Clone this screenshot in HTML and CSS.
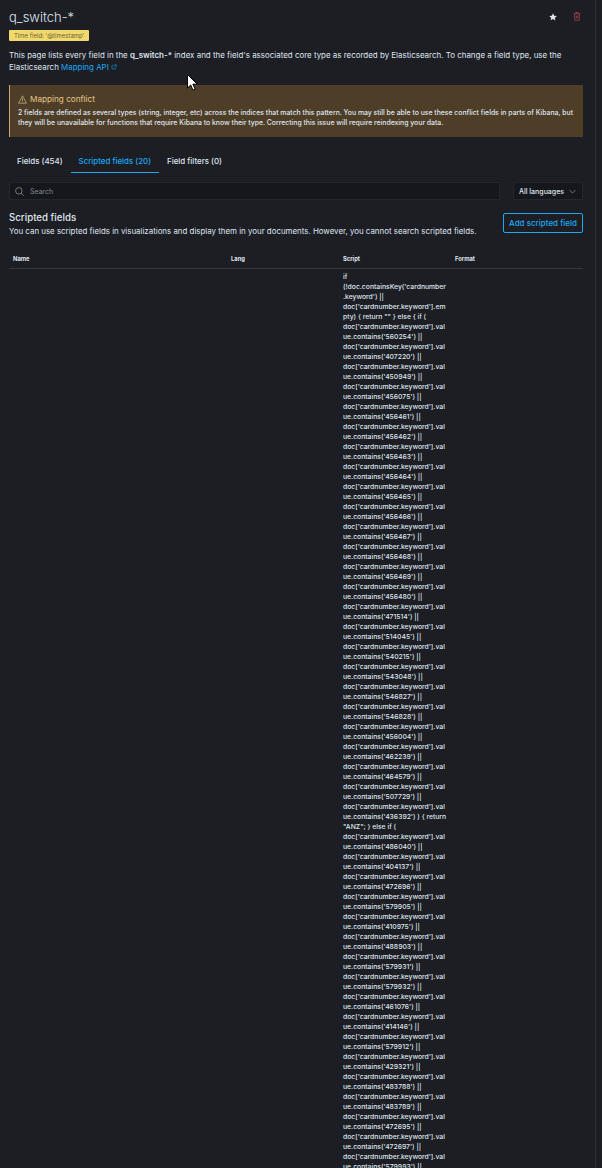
FILE: index.html
```html
<!DOCTYPE html>
<html lang="en">
<head>
<meta charset="utf-8">
<title>q_switch-*</title>
<link rel="stylesheet" href="styles.css">
</head>
<body>
<div class="page">
  <header class="head">
    <div class="head-left">
      <h1>q_switch-*</h1>
      <span class="badge">Time field: '@timestamp'</span>
    </div>
    <div class="head-icons">
      <svg class="ico" viewBox="0 0 16 16" width="8" height="8"><path fill="#dfe5ef" d="M8 0.6l2.300 4.900 5.300.7-3.900 3.700 1 5.300L8 12.100l-4.700 2.600 1-5.300L.4 6.200l5.300-.7z"/></svg>
      <svg class="ico" viewBox="0 0 16 18" width="8" height="9"><path fill="none" stroke="#8a3b42" stroke-width="2" d="M1 3.500h14M5.500 3.500V1h5v2.500M3 3.500l.6 13h8.800l.6-13M6.500 7v6M9.500 7v6"/></svg>
    </div>
  </header>
  <p class="intro">This page lists every field in the <b>q_switch-*</b> index and the field's associated core type as recorded by Elasticsearch. To change a field type, use the Elasticsearch <a class="link">Mapping API <svg viewBox="0 0 12 12" width="6" height="6"><path fill="none" stroke="#1ba9f5" d="M5 2.500H2v7.500h7.500V7M6.500 1.500h4v4M10.500 1.500L5.500 6.500"/></svg></a></p>
  <section class="callout">
    <div class="callout-title">
      <svg viewBox="0 0 16 16" width="9" height="9"><path fill="none" stroke="#d6bf8f" stroke-width="1.200" d="M8 1.500L15 14.500H1zM8 6v4.500M8 11.500v1.500"/></svg>
      <span>Mapping conflict</span>
    </div>
    <p>2 fields are defined as several types (string, integer, etc) across the indices that match this pattern. You may still be able to use these conflict fields in parts of Kibana, but they will be unavailable for functions that require Kibana to know their type. Correcting this issue will require reindexing your data.</p>
  </section>
  <nav class="tabs">
    <a class="tab">Fields (454)</a>
    <a class="tab active">Scripted fields (20)</a>
    <a class="tab">Field filters (0)</a>
  </nav>
  <div class="filters">
    <div class="search">
      <svg viewBox="0 0 16 16" width="9" height="9"><path fill="none" stroke="#98a2b3" stroke-width="1.200" d="M6.800 1a5.800 5.800 0 1 0 0 11.600a5.800 5.800 0 1 0 0-11.600zM11 11l4.500 4.500"/></svg>
      <span>Search</span>
    </div>
    <div class="select">
      <span>All languages</span>
      <svg viewBox="0 0 16 16" width="7" height="7"><path fill="none" stroke="#98a2b3" stroke-width="1.500" d="M1.500 5L8 11.500 14.500 5"/></svg>
    </div>
  </div>
  <div class="section-head">
    <div>
      <h2>Scripted fields</h2>
      <p>You can use scripted fields in visualizations and display them in your documents. However, you cannot search scripted fields.</p>
    </div>
    <button class="add">Add scripted field</button>
  </div>
  <table class="fields">
    <thead>
      <tr><th class="c-name">Name</th><th class="c-lang">Lang</th><th class="c-script">Script</th><th class="c-format">Format</th></tr>
    </thead>
    <tbody>
      <tr>
        <td></td><td></td>
        <td class="script">if (!doc.containsKey('cardnumber.keyword') || doc['cardnumber.keyword'].empty) { return "" } else { if ( doc['cardnumber.keyword'].value.contains('560254') || doc['cardnumber.keyword'].value.contains('407220') || doc['cardnumber.keyword'].value.contains('450949') || doc['cardnumber.keyword'].value.contains('456075') || doc['cardnumber.keyword'].value.contains('456461') || doc['cardnumber.keyword'].value.contains('456462') || doc['cardnumber.keyword'].value.contains('456463') || doc['cardnumber.keyword'].value.contains('456464') || doc['cardnumber.keyword'].value.contains('456465') || doc['cardnumber.keyword'].value.contains('456466') || doc['cardnumber.keyword'].value.contains('456467') || doc['cardnumber.keyword'].value.contains('456468') || doc['cardnumber.keyword'].value.contains('456469') || doc['cardnumber.keyword'].value.contains('456480') || doc['cardnumber.keyword'].value.contains('471514') || doc['cardnumber.keyword'].value.contains('514045') || doc['cardnumber.keyword'].value.contains('540215') || doc['cardnumber.keyword'].value.contains('543048') || doc['cardnumber.keyword'].value.contains('546827') || doc['cardnumber.keyword'].value.contains('546828') || doc['cardnumber.keyword'].value.contains('456004') || doc['cardnumber.keyword'].value.contains('462239') || doc['cardnumber.keyword'].value.contains('464579') || doc['cardnumber.keyword'].value.contains('507729') || doc['cardnumber.keyword'].value.contains('436392') ) { return "ANZ"; } else if ( doc['cardnumber.keyword'].value.contains('486040') || doc['cardnumber.keyword'].value.contains('404137') || doc['cardnumber.keyword'].value.contains('472696') || doc['cardnumber.keyword'].value.contains('579905') || doc['cardnumber.keyword'].value.contains('410975') || doc['cardnumber.keyword'].value.contains('488903') || doc['cardnumber.keyword'].value.contains('579931') || doc['cardnumber.keyword'].value.contains('579932') || doc['cardnumber.keyword'].value.contains('461076') || doc['cardnumber.keyword'].value.contains('414146') || doc['cardnumber.keyword'].value.contains('579912') || doc['cardnumber.keyword'].value.contains('429321') || doc['cardnumber.keyword'].value.contains('483788') || doc['cardnumber.keyword'].value.contains('483789') || doc['cardnumber.keyword'].value.contains('472695') || doc['cardnumber.keyword'].value.contains('472697') || doc['cardnumber.keyword'].value.contains('579993') ||</td>
        <td></td>
      </tr>
    </tbody>
  </table>
</div>
<svg class="cursor" viewBox="0 0 11 17" width="11" height="17"><path fill="#fff" stroke="#000" stroke-width="1" d="M.5.5v13.500l3.200-3 2.300 5.200 2.200-1-2.300-5h4.400z"/></svg>
</body>
</html>
```

FILE: styles.css
```css
* { box-sizing: border-box; }
html, body { margin: 0; height: 1168px; overflow: hidden; background: #1d1e24; }
body { font-family: Inter, "Liberation Sans", sans-serif; color: #dfe5ef; }
.page { width: 596px; height: 1168px; padding: 0 12px 0 9px; border-right: 1px solid #2f3138; overflow: hidden; }
.cursor { position: absolute; left: 187px; top: 74px; }
.head { display: flex; justify-content: space-between; align-items: flex-start; padding-top: 8px; }
.head-left { display: flex; flex-direction: column; align-items: flex-start; }
h1 { margin: 0; font-size: 13px; line-height: 18px; font-weight: 300; color: #dfe5ef; }
.badge { margin-top: 4px; height: 11px; padding: 0 5px; background: #f1d86f; color: #6d6330; font-size: 6px; line-height: 11px; border-radius: 1px; }
.head-icons { display: flex; gap: 16px; padding: 4px 2px 0 0; align-items: center; }
.intro { margin: 8px 0 0; font-size: 7.950px; line-height: 12px; color: #dfe5ef; }
.intro b { font-weight: 600; }
.link { color: #1ba9f5; }
.callout { margin-top: 12px; height: 52px; background: #4f3e27; border-left: 1px solid #c9a968; padding: 8px 8px 0 8px; }
.callout-title { display: flex; align-items: center; gap: 3px; font-size: 8.200px; line-height: 12px; color: #e2c48a; font-weight: 400; }
.callout p { margin: 3px 0 0; font-size: 6.870px; line-height: 10px; color: #dfe5ef; font-weight: 500; }
.tabs { display: flex; margin-top: 8px; height: 28px; }
.tab { padding: 2px 8px 0; font-size: 7.900px; line-height: 28px; font-weight: 500; color: #dfe5ef; }
.tab.active { color: #1ba9f5; border-bottom: 1px solid #1ba9f5; }
.filters { display: flex; gap: 13px; margin-top: 9px; }
.search { flex: 1; height: 18px; background: #16171c; border: 1px solid #25262d; display: flex; align-items: center; gap: 6px; padding-left: 5px; font-size: 7px; color: #7d8794; }
.select { width: 70px; height: 18px; background: #16171c; border: 1px solid #25262d; display: flex; align-items: center; justify-content: space-between; padding: 0 6px 0 5px; font-size: 7px; font-weight: 500; color: #dfe5ef; }
.section-head { display: flex; justify-content: space-between; align-items: flex-start; margin-top: 13px; }
h2 { margin: 0; font-size: 9.700px; line-height: 10px; font-weight: 500; color: #dfe5ef; }
.section-head p { margin: 2px 0 0; font-size: 7.900px; line-height: 12px; }
.add { width: 80px; height: 20px; padding: 0; background: transparent; border: 1px solid #1ba9f5; border-radius: 2px; color: #1ba9f5; font: 500 8px Inter, sans-serif; }
.fields { width: 574px; margin-top: 15px; border-collapse: collapse; table-layout: fixed; }
th { height: 16px; padding: 0 0 0 4px; text-align: left; font-size: 5.800px; font-weight: 700; color: #dfe5ef; border-bottom: 1px solid #343741; vertical-align: top; line-height: 13px; }
.c-name { width: 218px; }
.c-lang { width: 112px; }
.c-script { width: 112px; }
td { padding: 0; vertical-align: top; }
.script { padding: 3px 4px 0 4px; font-size: 6.800px; line-height: 10px; font-weight: 500; overflow-wrap: break-word; color: #dfe5ef; }
```
